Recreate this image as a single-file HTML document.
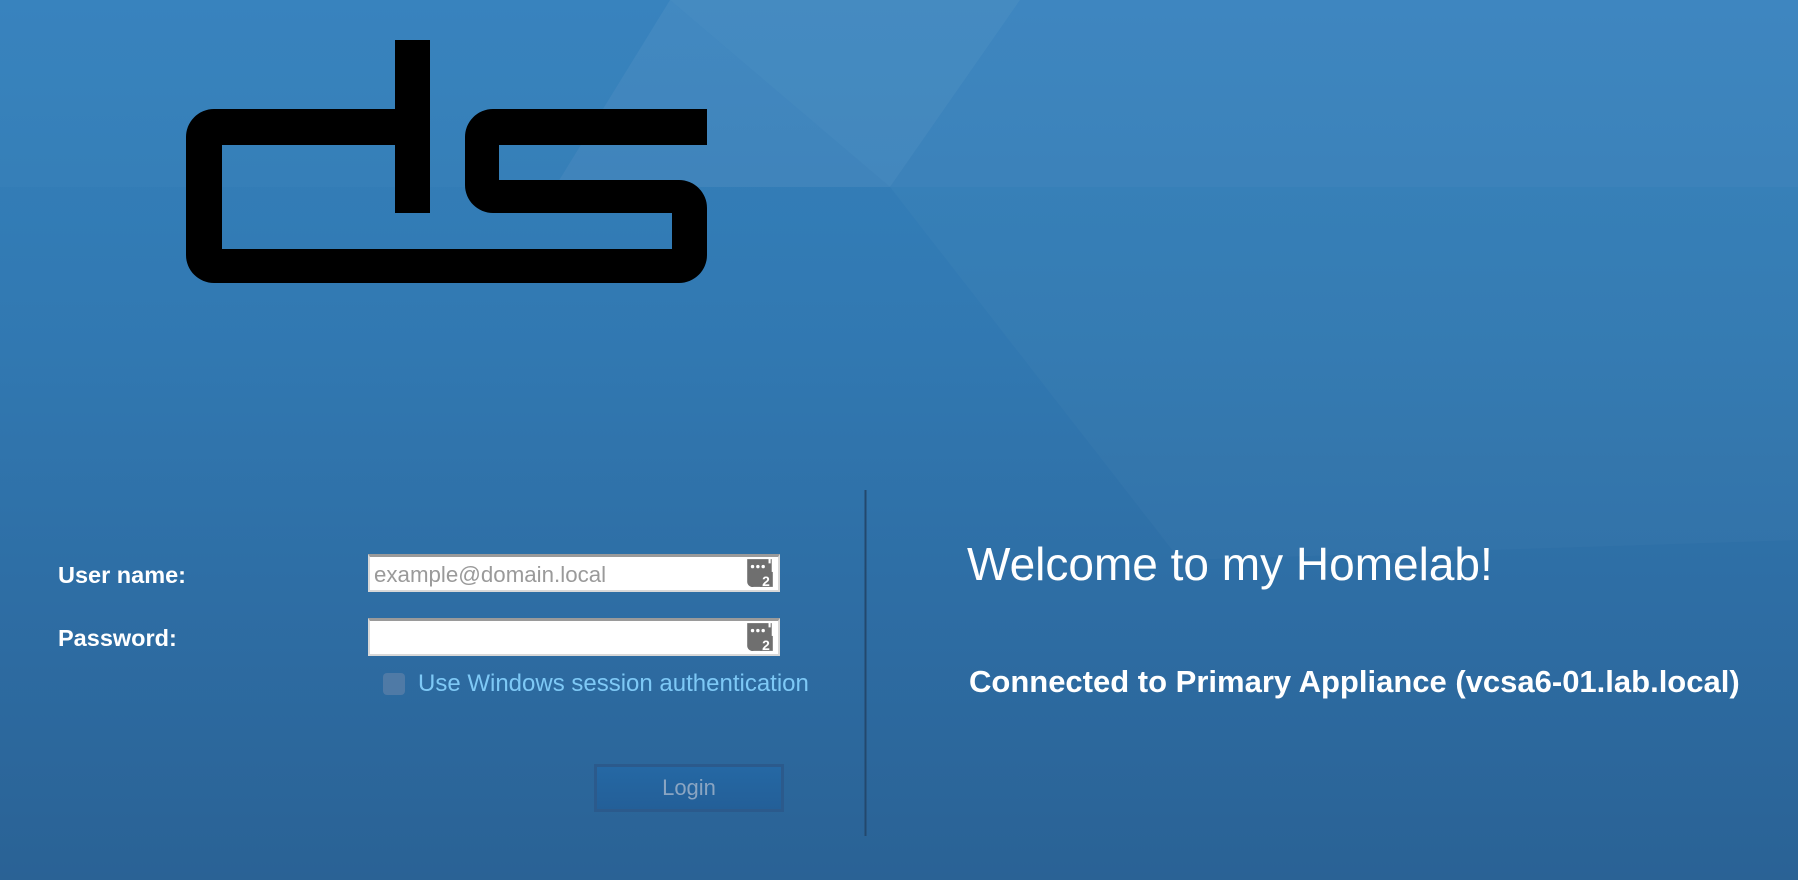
<!DOCTYPE html>
<html><head><meta charset="utf-8"><style>
html,body{margin:0;padding:0;}
body{width:1798px;height:880px;overflow:hidden;position:relative;font-family:"Liberation Sans",Arial,sans-serif;
background:linear-gradient(180deg,#3582bd 0%,#3178b1 40%,#2d6ba1 75%,#2a6295 100%);}
.abs{position:absolute;}
.lbl{color:#fff;font-weight:bold;font-size:23.5px;left:58px;}
.inp{left:368px;width:412px;height:38px;background:#fff;box-sizing:border-box;border:2px solid #d8d8d8;border-top:3px solid #9a9a9a;}
.ph{color:#9a9a9a;font-size:22.3px;position:absolute;left:4px;top:5px;}
.ic{position:absolute;right:3px;top:0px;width:30px;height:32px;}
</style></head><body>
<svg class="abs" style="left:0;top:0" width="1798" height="880">
<polygon points="670,0 1020,0 890,187" fill="rgba(255,255,255,0.07)"/>
<polygon points="670,0 890,187 555,187" fill="rgba(255,255,255,0.05)"/>
<polygon points="1020,0 1798,0 1798,187 890,187" fill="rgba(255,255,255,0.03)"/>
<polygon points="890,187 1798,187 1798,540 1180,560" fill="rgba(255,255,255,0.025)"/>
<rect x="0" y="0" width="1798" height="187" fill="rgba(255,255,255,0.015)"/>
<path fill="#000" d="M430,109 H214 A28,28 0 0 0 186,137 V255 A28,28 0 0 0 214,283 H679 A28,28 0 0 0 707,255 V208 A28,28 0 0 0 679,180 H499 V145 H707 V109 H493 A28,28 0 0 0 465,137 V185 A28,28 0 0 0 493,213 H672 V249 H222 V145 H430 Z"/>
<rect x="395" y="40" width="35" height="173" fill="#000"/>
<line x1="865.5" y1="490" x2="865.5" y2="836" stroke="#23486d" stroke-width="2"/>
</svg>
<div class="abs lbl" style="top:562px">User name:</div>
<div class="abs lbl" style="top:625px">Password:</div>
<div class="abs inp" style="top:554px"><span class="ph">example@domain.local</span>
<svg class="ic" viewBox="0 0 28 30"><path d="M2 2h20v4h2v-4h1v22h-9v4h-8a5 5 0 0 1-6-5z" fill="#6f6f6f"/><rect x="14" y="14" width="12" height="14" fill="#6f6f6f"/><circle cx="7" cy="9" r="1.6" fill="#fff"/><circle cx="12" cy="9" r="1.6" fill="#fff"/><circle cx="17" cy="9" r="1.6" fill="#fff"/><text x="16" y="27" font-size="13" font-weight="bold" fill="#fff" font-family="Liberation Sans">2</text></svg></div>
<div class="abs inp" style="top:618px">
<svg class="ic" viewBox="0 0 28 30"><path d="M2 2h20v4h2v-4h1v22h-9v4h-8a5 5 0 0 1-6-5z" fill="#6f6f6f"/><rect x="14" y="14" width="12" height="14" fill="#6f6f6f"/><circle cx="7" cy="9" r="1.6" fill="#fff"/><circle cx="12" cy="9" r="1.6" fill="#fff"/><circle cx="17" cy="9" r="1.6" fill="#fff"/><text x="16" y="27" font-size="13" font-weight="bold" fill="#fff" font-family="Liberation Sans">2</text></svg></div>
<div class="abs" style="left:383px;top:673px;width:22px;height:22px;border-radius:4px;background:#4f7aa6;"></div>
<div class="abs" style="left:418px;top:670px;color:#7ec9f6;font-size:24px;">Use Windows session authentication</div>
<div class="abs" style="left:594px;top:764px;width:190px;height:48px;box-sizing:border-box;border:3px solid #2b5a8c;background:linear-gradient(#2568a4,#235f98);color:#8aa5c2;font-size:22px;text-align:center;line-height:42px;">Login</div>
<div class="abs" style="left:967px;top:537px;color:#fff;font-size:46px;">Welcome to my Homelab!</div>
<div class="abs" style="left:969px;top:664px;color:#fff;font-size:31px;font-weight:bold;">Connected to Primary Appliance (vcsa6-01.lab.local)</div>
</body></html>
